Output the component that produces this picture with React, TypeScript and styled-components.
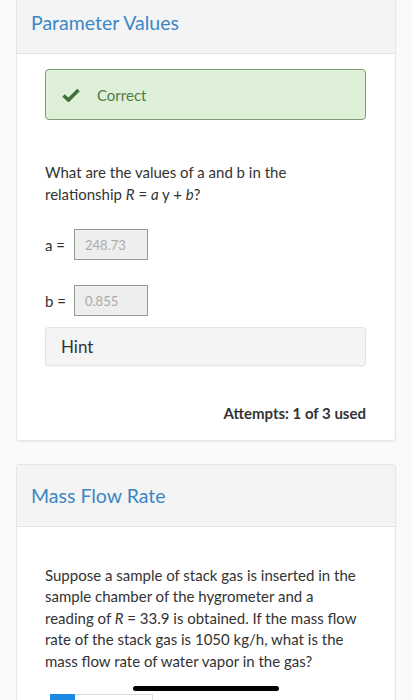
import styled, { createGlobalStyle } from "styled-components";

const GlobalStyle = createGlobalStyle`
  html, body {
    margin: 0;
    padding: 0;
    background: #fafafa;
    font-family: Lato, "Open Sans", sans-serif;
    color: #333;
    overflow: hidden;
  }
`;

const Page = styled.div`
  width: 412px;
  height: 700px;
  overflow: hidden;
  position: relative;
  padding: 0 16px 0 16px;
  box-sizing: border-box;
`;

const Card = styled.section<{ $first?: boolean }>`
  width: 380px;
  background: #fff;
  border: 1px solid #e6e6e6;
  border-radius: 3px;
  box-shadow: 0 1px 2px rgba(0, 0, 0, 0.06);
  margin-top: ${(p) => (p.$first ? "-9px" : "23px")};
  box-sizing: border-box;
`;

const Header = styled.div`
  height: 62px;
  background: #f4f4f4;
  border-bottom: 1px solid #e3e3e3;
  display: flex;
  align-items: center;
  padding-left: 14px;
  box-sizing: border-box;
`;

const Title = styled.h2`
  margin: 0;
  font-weight: 400;
  font-size: 19.5px;
  color: #3b87c6;
`;

const Body = styled.div`
  padding: 15px 29px 0 28px;
`;

const Alert = styled.div`
  height: 51px;
  background: #dff0d8;
  border: 1px solid #7c9c74;
  border-radius: 4px;
  display: flex;
  align-items: center;
  padding-left: 16px;
  gap: 17px;
  box-sizing: border-box;
  color: #4f7a4a;
  font-size: 15px;
`;

const Question = styled.p`
  margin: 41px 0 0 0;
  font-size: 15px;
  line-height: 22px;
  color: #333;
`;

const Em = styled.i`
  font-family: Lato, sans-serif;
`;

const Field = styled.div<{ $top: number }>`
  display: flex;
  align-items: center;
  gap: 7px;
  margin-top: ${(p) => p.$top}px;
  font-size: 15px;
  color: #333;
`;

const Label = styled.span`
  width: 22px;
`;

const Input = styled.div`
  width: 74px;
  height: 31px;
  background: #eeeeee;
  border: 1px solid #8e9e8a;
  box-sizing: border-box;
  display: flex;
  align-items: center;
  padding-left: 10px;
  font-size: 13px;
  color: #aaa;
`;

const HintButton = styled.div`
  margin-top: 11px;
  height: 39px;
  background: #f4f4f4;
  border: 1px solid #e4e4e4;
  border-radius: 3px;
  box-shadow: 0 1px 1px rgba(0, 0, 0, 0.05);
  display: flex;
  align-items: center;
  padding-left: 15px;
  box-sizing: border-box;
  font-size: 17px;
  color: #333;
`;

const Attempts = styled.div`
  text-align: right;
  font-weight: 700;
  font-size: 15px;
  color: #333;
  margin-top: 38px;
  padding-bottom: 18px;
`;

const Paragraph = styled.p`
  margin: 23px 6px 0 0;
  font-size: 15px;
  line-height: 21.4px;
  color: #333;
`;

const AnswerRow = styled.div`
  margin-top: 22px;
  margin-left: 5px;
  display: flex;
  height: 20px;
`;

const BlueTab = styled.div`
  width: 25px;
  background: #1e88e5;
`;

const AnswerBox = styled.div`
  width: 77px;
  border-top: 1px solid #ddd;
  border-right: 1px solid #ddd;
`;

const HomeBar = styled.div`
  position: absolute;
  left: 133px;
  top: 686px;
  width: 146px;
  height: 5px;
  border-radius: 3px;
  background: #000;
`;

const Check = () => (
  <svg width="18" height="14" viewBox="0 0 18 14">
    <path d="M1.5 7.5 L6.5 12 L16.5 2" fill="none" stroke="#3f6f3b" strokeWidth="3.6" strokeLinejoin="miter" />
  </svg>
);

export default function App() {
  return (
    <Page>
      <GlobalStyle />
      <Card $first>
        <Header>
          <Title>Parameter Values</Title>
        </Header>
        <Body>
          <Alert>
            <Check />
            <span>Correct</span>
          </Alert>
          <Question>
            What are the values of a and b in the relationship <Em>R</Em> = <Em>a</Em> y + <Em>b</Em>?
          </Question>
          <Field $top={24}>
            <Label>a =</Label>
            <Input>248.73</Input>
          </Field>
          <Field $top={25}>
            <Label>b =</Label>
            <Input>0.855</Input>
          </Field>
          <HintButton>Hint</HintButton>
          <Attempts>Attempts: 1 of 3 used</Attempts>
        </Body>
      </Card>
      <Card>
        <Header>
          <Title>Mass Flow Rate</Title>
        </Header>
        <Body>
          <Paragraph>
            Suppose a sample of stack gas is inserted in the sample chamber of the hygrometer and a reading of <Em>R</Em> = 33.9 is obtained. If the mass flow rate of the stack gas is 1050 kg/h, what is the mass flow rate of water vapor in the gas?
          </Paragraph>
          <AnswerRow>
            <BlueTab />
            <AnswerBox />
          </AnswerRow>
        </Body>
      </Card>
      <HomeBar />
    </Page>
  );
}
